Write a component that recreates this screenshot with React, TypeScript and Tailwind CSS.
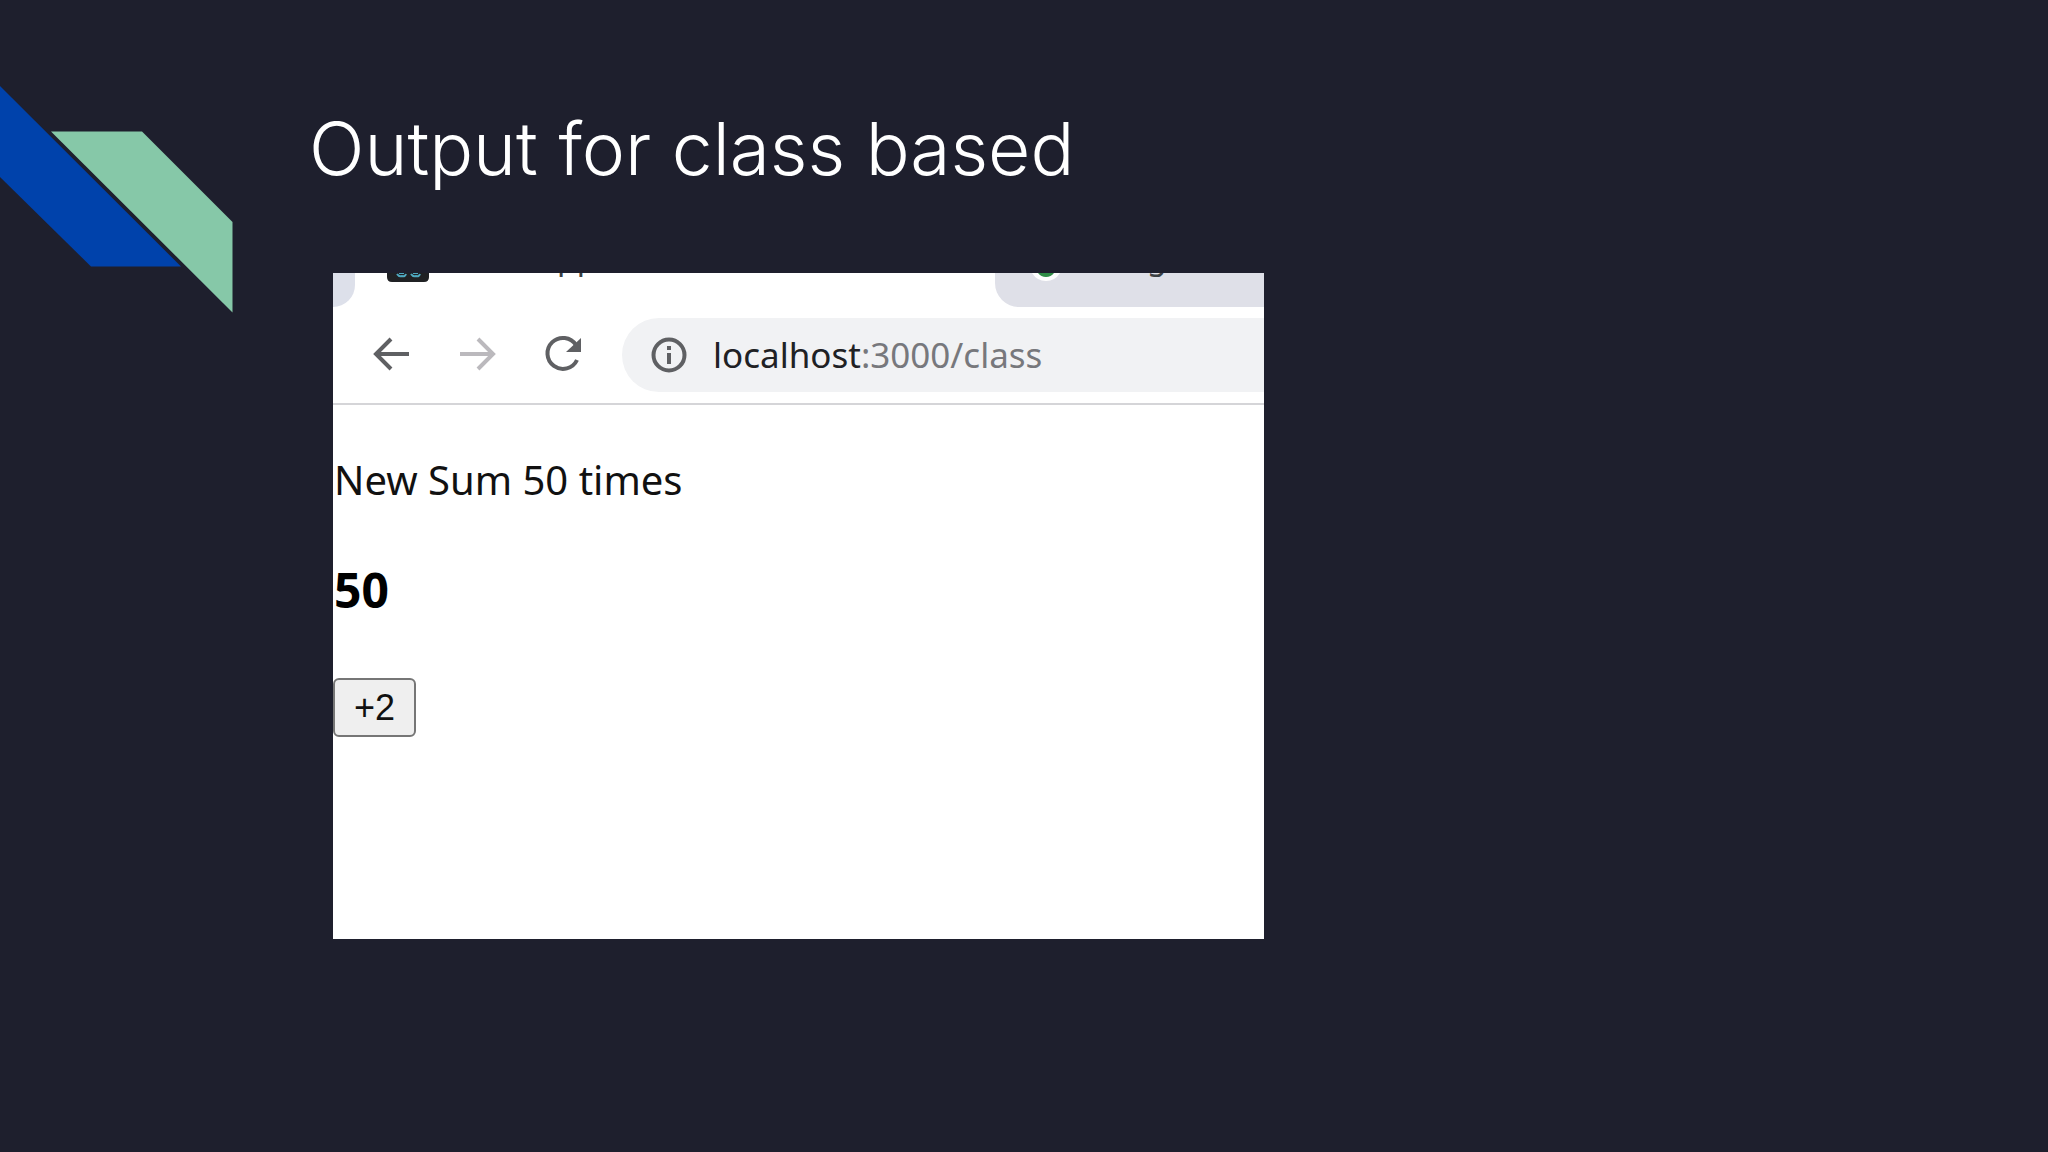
import type { ReactNode } from "react";

const SLIDE_TITLE = "Output for class based";
const ADDRESS = { host: "localhost", path: ":3000/class" };

function CornerShapes() {
  return (
    <svg viewBox="0 0 233 320" className="w-[233px] h-[320px] shrink-0" aria-hidden="true">
      <path d="M0 86L181 266.500H91L0 177Z" fill="#0042ab" />
      <path d="M51 131.500H142L232.500 222V312.500Z" fill="#86c8a8" />
    </svg>
  );
}

function NavButton({ label, children }: { label: string; children: ReactNode }) {
  return (
    <button type="button" aria-label={label} className="w-10 h-10 flex items-center justify-center">
      <svg viewBox="0 0 40 40" className="w-10 h-10" fill="none">
        {children}
      </svg>
    </button>
  );
}

// Only the descenders of a tab title reach into the visible strip
function TabTitle({ children }: { children: ReactNode }) {
  return (
    <div className="h-[6px] overflow-hidden flex flex-col justify-end">
      <span className="text-[32px] leading-[44px] text-[#3c4043]">{children}</span>
    </div>
  );
}

function TabStrip() {
  return (
    <div className="flex h-[34px] overflow-hidden">
      <div className="w-[22px] rounded-br-3xl bg-[#dde0ea]" />

      {/* Active tab */}
      <div className="flex flex-1 gap-[128px] pl-8">
        <svg viewBox="0 0 42 9" className="w-[42px] h-[9px]" aria-hidden="true">
          <path d="M0 0H42V4Q42 9 37 9H5Q0 9 0 4Z" fill="#202124" />
          <path d="M10 1Q12 4 15 3Q18 4 19 1M12 0H17M24 1Q26 4 29 3Q32 4 33 1M26 0H31" stroke="#4fa9c0" strokeWidth="2" fill="none" />
        </svg>
        <TabTitle>pp</TabTitle>
      </div>

      {/* Background tab */}
      <div className="flex w-[269px] gap-[84px] rounded-bl-3xl bg-[#dfe0e8] pl-[34px]">
        <svg viewBox="0 0 34 9" className="w-[34px] h-[9px]" aria-hidden="true">
          <path d="M3 0Q8 8 17 8Q26 8 31 0Z" fill="#fff" />
          <path d="M9 0Q12 4 17 4Q22 4 25 0Z" fill="#2f8d46" />
        </svg>
        <TabTitle>g</TabTitle>
      </div>
    </div>
  );
}

function Toolbar() {
  return (
    <div className="flex items-center gap-[45px] border-b-2 border-[#d5d5d8] pt-[11px] pb-[11px] pl-[39px]">
      <NavButton label="Back">
        <path d="M37 19H5M19 4L4 19L19 34" stroke="#5f6063" strokeWidth="4" />
      </NavButton>
      <NavButton label="Forward">
        <path d="M3 19H35M21 4L36 19L21 34" stroke="#bbb9bd" strokeWidth="4" />
      </NavButton>
      <NavButton label="Reload">
        <path d="M34 10A15.500 15.500 0 1 0 35 25" stroke="#5f6063" strokeWidth="4" />
        <path d="M39 3V17H24Z" fill="#5f6063" />
      </NavButton>
      <div className="-ml-[5px] flex h-[74px] flex-1 items-center gap-[26px] rounded-l-full bg-[#f1f2f4] pl-[29px]">
        <svg viewBox="0 0 36 36" className="w-9 h-9 shrink-0" fill="none" aria-hidden="true">
          <circle cx="18" cy="18" r="15.500" stroke="#5f6063" strokeWidth="4" />
          <path d="M18 16V27M18 9V13" stroke="#5f6063" strokeWidth="4" />
        </svg>
        <div className="whitespace-nowrap text-[35px] leading-10 text-[#202124]">
          {ADDRESS.host}
          <span className="text-[#77787c]">{ADDRESS.path}</span>
        </div>
      </div>
    </div>
  );
}

function BrowserWindow() {
  return (
    <section className="w-full max-w-[931px] overflow-hidden bg-white font-['Noto_Sans',sans-serif]">
      <TabStrip />
      <Toolbar />
      <div className="flex flex-col items-start pt-[47px] pb-[202px] text-[#111]">
        <p className="pl-px text-[40px] leading-[56px]">New Sum 50 times</p>
        <h3 className="mt-[50px] pl-px text-5xl leading-[64px] font-bold text-black">50</h3>
        <button
          type="button"
          className="mt-14 h-[59px] w-[83px] rounded-md border-2 border-[#767676] bg-[#efefef] font-['Liberation_Sans',sans-serif] text-4xl"
        >
          +2
        </button>
      </div>
    </section>
  );
}

export default function App() {
  return (
    <div className="flex min-h-screen items-start bg-[#1e1f2d]">
      <CornerShapes />
      <main className="flex-1 pt-[104px] pr-20">
        <h1 className="pl-[76px] font-['Inter',sans-serif] text-[73px] leading-[90px] font-light text-white">
          {SLIDE_TITLE}
        </h1>
        <div className="pt-[79px] pl-[100px]">
          <BrowserWindow />
        </div>
      </main>
    </div>
  );
}
